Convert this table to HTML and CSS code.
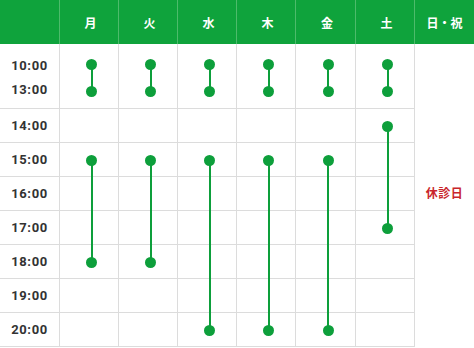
FILE: index.html
```html
<!DOCTYPE html>
<html lang="ja">
<head>
<meta charset="utf-8">
<link rel="stylesheet" href="styles.css">
</head>
<body>
<div class="schedule">
  <div class="head"></div>
  <div class="head day">月</div>
  <div class="head day">火</div>
  <div class="head day">水</div>
  <div class="head day">木</div>
  <div class="head day">金</div>
  <div class="head day">土</div>
  <div class="head day last">日・祝</div>

  <div class="time first"><span>10:00</span><span>13:00</span></div>
  <div class="cell first c1"></div><div class="cell first c2"></div><div class="cell first c3"></div>
  <div class="cell first c4"></div><div class="cell first c5"></div><div class="cell first c6"></div>

  <div class="time r3">14:00</div>
  <div class="cell r3 c1"></div><div class="cell r3 c2"></div><div class="cell r3 c3"></div><div class="cell r3 c4"></div><div class="cell r3 c5"></div><div class="cell r3 c6"></div>
  <div class="time r4">15:00</div>
  <div class="cell r4 c1"></div><div class="cell r4 c2"></div><div class="cell r4 c3"></div><div class="cell r4 c4"></div><div class="cell r4 c5"></div><div class="cell r4 c6"></div>
  <div class="time r5">16:00</div>
  <div class="cell r5 c1"></div><div class="cell r5 c2"></div><div class="cell r5 c3"></div><div class="cell r5 c4"></div><div class="cell r5 c5"></div><div class="cell r5 c6"></div>
  <div class="time r6">17:00</div>
  <div class="cell r6 c1"></div><div class="cell r6 c2"></div><div class="cell r6 c3"></div><div class="cell r6 c4"></div><div class="cell r6 c5"></div><div class="cell r6 c6"></div>
  <div class="time r7">18:00</div>
  <div class="cell r7 c1"></div><div class="cell r7 c2"></div><div class="cell r7 c3"></div><div class="cell r7 c4"></div><div class="cell r7 c5"></div><div class="cell r7 c6"></div>
  <div class="time r8">19:00</div>
  <div class="cell r8 c1"></div><div class="cell r8 c2"></div><div class="cell r8 c3"></div><div class="cell r8 c4"></div><div class="cell r8 c5"></div><div class="cell r8 c6"></div>
  <div class="time r9">20:00</div>
  <div class="cell r9 c1"></div><div class="cell r9 c2"></div><div class="cell r9 c3"></div><div class="cell r9 c4"></div><div class="cell r9 c5"></div><div class="cell r9 c6"></div>

  <div class="closed">休診日</div>

  <div class="range am c1"><i></i><b></b><i></i></div>
  <div class="range am c2"><i></i><b></b><i></i></div>
  <div class="range am c3"><i></i><b></b><i></i></div>
  <div class="range am c4"><i></i><b></b><i></i></div>
  <div class="range am c5"><i></i><b></b><i></i></div>
  <div class="range am c6"><i></i><b></b><i></i></div>

  <div class="range pm c1 p15-18"><i></i><b></b><i></i></div>
  <div class="range pm c2 p15-18"><i></i><b></b><i></i></div>
  <div class="range pm c3 p15-20"><i></i><b></b><i></i></div>
  <div class="range pm c4 p15-20"><i></i><b></b><i></i></div>
  <div class="range pm c5 p15-20"><i></i><b></b><i></i></div>
  <div class="range pm c6 p14-17"><i></i><b></b><i></i></div>
</div>
</body>
</html>
```

FILE: styles.css
```css
* { box-sizing: border-box; margin: 0; padding: 0; }
html, body { width: 474px; height: 348px; overflow: hidden; background: #fff; }
body { font-family: Roboto, "Noto Sans CJK JP", sans-serif; }

.schedule {
  display: grid;
  grid-template-columns: 60px 59px 59px 59px 59px 60px 59px 59px;
  grid-template-rows: 44px 65px repeat(7, 34px);
  width: 474px;
}

.head {
  grid-row: 1;
  background: #0fa33c;
  border-right: 1px solid #4dbb6b;
}
.head.day {
  display: flex;
  align-items: center;
  justify-content: center;
  padding-left: 3px;
  color: #fff;
  font-family: "Noto Sans CJK JP", sans-serif;
  font-weight: 700;
  font-size: 12px;
}
.head.last { border-right: none; padding-left: 0; }

.time {
  grid-column: 1;
  display: flex;
  flex-direction: column;
  align-items: center;
  justify-content: center;
  font-family: Roboto, sans-serif;
  font-weight: 700;
  font-size: 13px;
  color: #333;
  letter-spacing: 0.6px;
  border-right: 1px solid #dcdcdc;
  border-bottom: 1px solid #dcdcdc;
}
.time.first { grid-row: 2; gap: 9px; padding-top: 3px; }
.r3 { grid-row: 3; }
.r4 { grid-row: 4; }
.r5 { grid-row: 5; }
.r6 { grid-row: 6; }
.r7 { grid-row: 7; }
.r8 { grid-row: 8; }
.r9 { grid-row: 9; }
.first { grid-row: 2; }

.cell {
  border-right: 1px solid #dcdcdc;
  border-bottom: 1px solid #dcdcdc;
}

.c1 { grid-column: 2; }
.c2 { grid-column: 3; }
.c3 { grid-column: 4; }
.c4 { grid-column: 5; }
.c5 { grid-column: 6; }
.c6 { grid-column: 7; }

.closed {
  grid-column: 8;
  grid-row: 2 / 10;
  display: flex;
  align-items: center;
  justify-content: center;
  padding-bottom: 6px;
  color: #c9252c;
  font-family: "Noto Sans CJK JP", sans-serif;
  font-weight: 700;
  font-size: 12px;
  letter-spacing: 0.5px;
}

.range {
  display: flex;
  flex-direction: column;
  align-items: center;
  justify-self: center;
  width: 11px;
  margin-left: 4px;
  z-index: 1;
}
.range i {
  display: block;
  width: 11px;
  height: 11px;
  border-radius: 50%;
  background: #0d9f3b;
  flex: none;
}
.range b {
  display: block;
  width: 2px;
  flex: 1;
  background: #0d9f3b;
  margin: -1px 0;
}
.range.am { grid-row: 2; margin-top: 15px; margin-bottom: 12px; }
.range.pm { margin-top: 12px; margin-bottom: 11px; }
.p15-18 { grid-row: 4 / 8; }
.p15-20 { grid-row: 4 / 10; }
.p14-17 { grid-row: 3 / 7; }
```
